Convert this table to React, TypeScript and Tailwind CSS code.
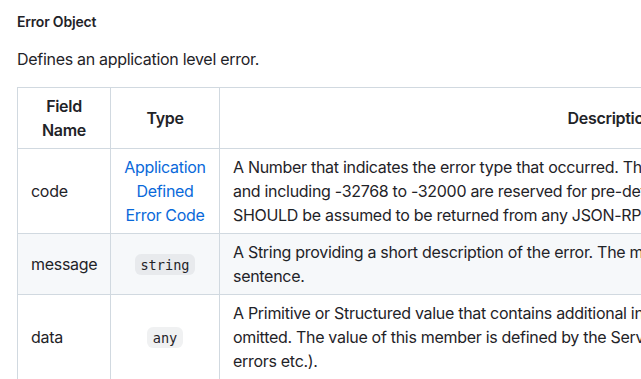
import React from "react";

const font = { fontFamily: "Inter, 'Noto Sans', 'Liberation Sans', sans-serif" };

export default function App() {
  const cell = "border border-[#d1d9e0] px-[13px] py-[6px] align-middle";
  const code =
    "rounded-[6px] bg-[#818b981f] px-[5.4px] py-[2.7px] text-[13.6px] tracking-normal font-['DejaVu_Sans_Mono',monospace]";
  return (
    <div
      className="w-[641px] h-[379px] overflow-hidden bg-white pl-[17px] pt-[13px] text-[16px] leading-[24px] tracking-[-0.3px] text-[#1f2328]"
      style={font}
    >
      <h5 className="mb-[16px] text-[14px] font-semibold leading-[18px] tracking-[-0.2px]">Error Object</h5>
      <p className="mb-[16px]">Defines an application level error.</p>
      <table className="table-fixed border-collapse w-[984px]">
        <colgroup>
          <col className="w-[93px]" />
          <col className="w-[109px]" />
          <col className="w-[782px]" />
        </colgroup>
        <thead>
          <tr className="bg-white">
            <th className={`${cell} text-center font-semibold`}>
              Field
              <br />
              Name
            </th>
            <th className={`${cell} text-center font-semibold`}>Type</th>
            <th className={`${cell} text-center font-semibold`}>Description</th>
          </tr>
        </thead>
        <tbody>
          <tr className="bg-white">
            <td className={`${cell} text-left`}>code</td>
            <td className={`${cell} text-center whitespace-nowrap`}>
              <a className="text-[#0969da]" href="#">
                Application
                <br />
                Defined
                <br />
                Error Code
              </a>
            </td>
            <td className={`${cell} whitespace-nowrap`}>
              A Number that indicates the error type that occurred. This MUST be an integer. The error codes from
              <br />
              and including -32768 to -32000 are reserved for pre-defined errors. These pre-defined errors
              <br />
              SHOULD be assumed to be returned from any JSON-RPC api.
            </td>
          </tr>
          <tr className="bg-[#f6f8fa]">
            <td className={`${cell} text-left`}>message</td>
            <td className={`${cell} text-center`}>
              <code className={code}>string</code>
            </td>
            <td className={`${cell} whitespace-nowrap`}>
              A String providing a short description of the error. The message SHOULD be limited to a concise single
              <br />
              sentence.
            </td>
          </tr>
          <tr className="bg-white">
            <td className={`${cell} text-left`}>data</td>
            <td className={`${cell} text-center`}>
              <code className={code}>any</code>
            </td>
            <td className={`${cell} whitespace-nowrap`}>
              A Primitive or Structured value that contains additional information about the error. This may be
              <br />
              omitted. The value of this member is defined by the Server (e.g. detailed error information, nested
              <br />
              errors etc.).
            </td>
          </tr>
        </tbody>
      </table>
    </div>
  );
}
